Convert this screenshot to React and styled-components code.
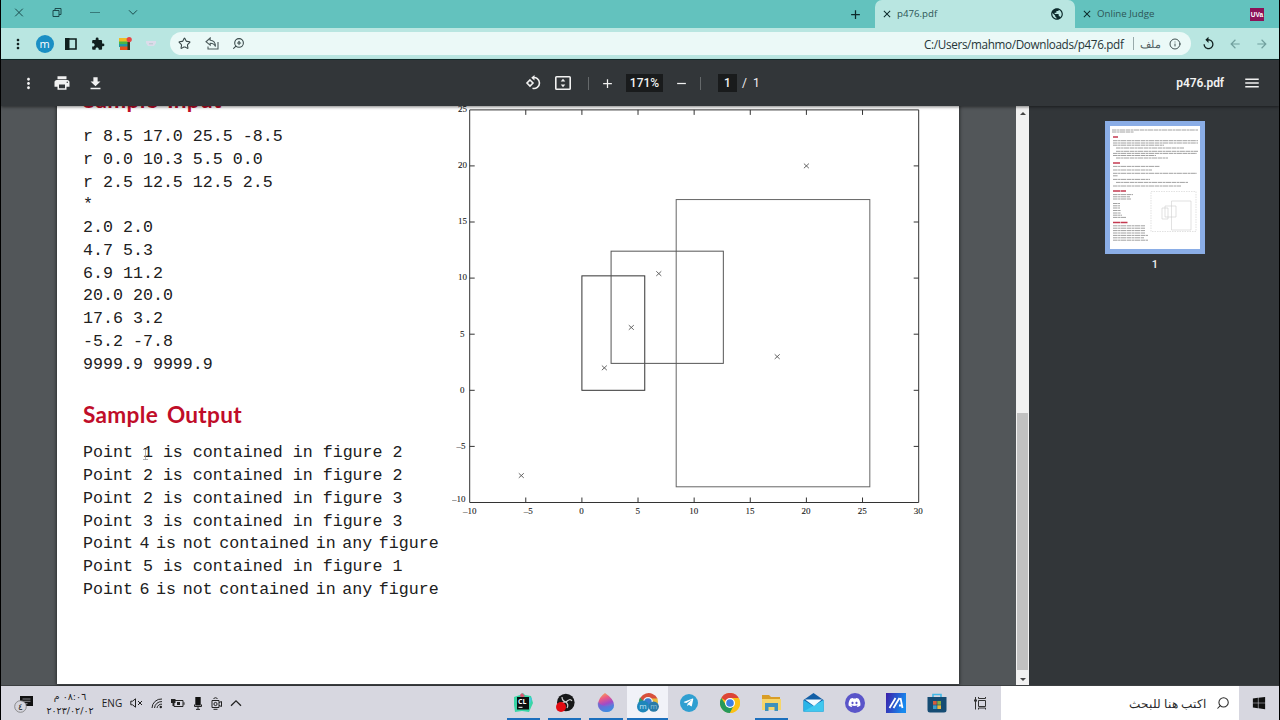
import React from 'react'
import styled, { createGlobalStyle, css } from 'styled-components';
import { Star, ZoomIn, Search, Info } from 'lucide-react';
import {
  MdMoreVert, MdPrint, MdDownload, MdExtension, MdPublic, MdMenu,
  MdAdd, MdRemove, MdClose, MdArrowBack, MdArrowForward, MdReplay,
} from 'react-icons/md';
import { FaWindows, FaDiscord, FaTelegramPlane } from 'react-icons/fa';

const inputLines = [
  'r 8.5 17.0 25.5 -8.5',
  'r 0.0 10.3 5.5 0.0',
  'r 2.5 12.5 12.5 2.5',
  '*',
  '2.0 2.0',
  '4.7 5.3',
  '6.9 11.2',
  '20.0 20.0',
  '17.6 3.2',
  '-5.2 -7.8',
  '9999.9 9999.9',
];

const outputLines = [
  { text: 'Point 1 is contained in figure 2' },
  { text: 'Point 2 is contained in figure 2' },
  { text: 'Point 2 is contained in figure 3' },
  { text: 'Point 3 is contained in figure 3' },
  { text: 'Point 4 is not contained in any figure', tight: true },
  { text: 'Point 5 is contained in figure 1' },
  { text: 'Point 6 is not contained in any figure', tight: true },
];

// chart space: 0,0 is the top left of the svg
const px = (x) => 129.9 + x * 11.225;
const py = (y) => 284.3 - y * 11.22;
const minus = (n) => String(n).replace('-', '–');

const rects = [
  { x1: 8.4, y1: 17, x2: 25.65, y2: -8.6, c: '#666' },
  { x1: 0, y1: 10.2, x2: 5.6, y2: 0, c: '#333' },
  { x1: 2.6, y1: 12.4, x2: 12.6, y2: 2.4, c: '#555' },
];

const marks = [
  [2, 2],
  [4.4, 5.6],
  [6.85, 10.4],
  [20, 20],
  [17.4, 3],
  [-5.4, -7.6],
];

function Chart() {
  const xs = [-10, -5, 0, 5, 10, 15, 20, 25, 30];
  const ys = [25, 20, 15, 10, 5, 0, -5, -10];
  return (
    <ChartSvg width="480" height="420" viewBox="0 0 480 420">
      <g stroke="#333" strokeWidth="1" fill="none">
        <path d="M17.7 3.9V396.5M466.7 3.9V396.5M17.7 3.9H466.7M17.7 396.5H466.7" />
        {xs.slice(1, -1).map((x) => (
          <path key={x} d={`M${px(x)} 3.9v5M${px(x)} 396.5v-5`} />
        ))}
        {ys.slice(1, -1).map((y) => (
          <path key={y} d={`M17.7 ${py(y)}h5M466.7 ${py(y)}h-5`} />
        ))}
      </g>
      {rects.map((r) => (
        <rect key={r.x1} x={px(r.x1)} y={py(r.y1)} width={px(r.x2) - px(r.x1)}
          height={py(r.y2) - py(r.y1)} fill="none" stroke={r.c} strokeWidth="1" />
      ))}
      {marks.map(([x, y]) => (
        <path key={x} d={`M${px(x) - 2.5} ${py(y) - 2.3}l5 4.6m0 -4.6l-5 4.6`} stroke="#555" strokeWidth="0.9" />
      ))}
      {ys.map((y) => (
        <text key={y} x={y < 0 ? 13.5 : y === 0 || y === 5 ? 12.5 : 15} y={y === -10 ? 396 : py(y) + 2.3} textAnchor="end">{minus(y)}</text>
      ))}
      {xs.map((x) => (
        <text key={x} x={px(x) - (x > -10 ? 0.4 : 0) + (x === -5 ? 2.9 : 0)} y="407.5" textAnchor="middle">{minus(x)}</text>
      ))}
    </ChartSvg>
  );
}

// [y, start, end, red]
const thumbRows = [
  [4, 2, 88], [6, 2, 24], [11, 3, 8, 1], [14.7, 3, 88], [17, 3, 88], [19.2, 3, 54], [22, 6, 74],
  [25.3, 6, 88], [27.4, 3, 87], [29.5, 3, 46], [32, 6, 58], [37, 3, 10, 1], [40.4, 3, 50], [44, 3, 42],
  [47.3, 3, 87], [49.8, 3, 8], [53.4, 3, 40], [56.4, 6, 78], [60, 3, 71], [65, 3, 16, 1],
  [68.6, 3, 23], [70.8, 3, 20], [73, 3, 21], [77.5, 3, 10], [79.8, 3, 10], [82, 3, 10], [84.5, 3, 11],
  [87, 3, 11], [89.2, 3, 12], [91.4, 3, 16], [96.5, 3, 18, 1], [99.8, 3, 35], [102.2, 3, 35],
  [104.6, 3, 35], [107, 3, 35], [109.4, 3, 38], [111.8, 3, 34], [114.2, 3, 38],
];

function ThumbPage() {
  return (
    <svg width="90" height="123" viewBox="0 0 90 123">
      {thumbRows.map(([y, a, b, red]) => (
        <path key={y} d={`M${a} ${y}H${b}`} stroke={red ? '#c43a50' : '#a2a2a2'}
          strokeWidth={red ? 1.5 : 1} strokeDasharray={red ? '7 .5' : '4.6 .5 2.4 .4 5.4 .6'} />
      ))}
      <g fill="none" stroke="#cfcfcf" strokeWidth=".6">
        <path d="M41 65.5H86V105.5H41Z" strokeDasharray="1.5 1" />
        <path d="M61.5 75H81V104H61.5ZM52 82H58V93H52ZM55 80H66V91H55Z" />
      </g>
    </svg>
  );
}

function ChromeLogo() {
  return (
    <svg width="20" height="20" viewBox="0 0 20 20">
      <circle cx="10" cy="10" r="10" fill="#fbc116" />
      <path d="M10 10L1.3 5A10 10 0 0 1 18.7 5Z" fill="#dc4437" />
      <path d="M1.3 5A10 10 0 0 0 10 20L14 12L6 12Z" fill="#26995a" />
      <path d="M10 5H18.7A10 10 0 0 1 10 20L14.5 12Z" fill="#fbc116" />
      <circle cx="10" cy="10" r="5" fill="#fff" />
      <circle cx="10" cy="10" r="3.8" fill="#3c7fe6" />
    </svg>
  );
}

function ChromeProfile() {
  return (
    <svg width="22" height="21" viewBox="0 0 22 21">
      <path d="M2 12A9.8 9.8 0 0 1 20.5 6.5L11 10Z" fill="#d8503c" />
      <path d="M2 12A10 10 0 0 1 3 5.5L10 13L8 18Z" fill="#319b62" />
      <path d="M14 6.5H20.5A9 9 0 0 1 20 14L14 14Z" fill="#e8bb3d" />
      <circle cx="11" cy="10" r="5" fill="#eef4fb" />
      <circle cx="11" cy="10" r="3.7" fill="#3a7cd0" />
      <circle cx="16.7" cy="14.6" r="5.2" fill="#287ba8" />
      <circle cx="6" cy="14.6" r="6" fill="#1e86ba" />
      <text x="6" y="17" textAnchor="middle" fontSize="8" fill="#c7e8f5">m</text>
      <text x="16.7" y="17" textAnchor="middle" fontSize="7.5" fill="#8fc6de">m</text>
    </svg>
  );
}

const apps = [
  {
    name: 'clion', open: true,
    icon: (
      <svg width="20" height="20" viewBox="0 0 20 20">
        <path d="M1 4L7 2L10 0L12 2L18 3L20 10L16 19L9 18L2 19L1 12Z" fill="#39d6a5" />
        <path d="M7 2L9 0L12 3L8 5Z" fill="#d85470" />
        <path d="M13 4L19 5L17 11Z" fill="#45c9dc" />
        <rect x="4" y="4" width="12" height="12.5" fill="#0a0d0d" />
        <text x="5" y="11" fontSize="7" fontWeight="700" fill="#fff">CL</text>
        <path d="M5.5 14.3h4" stroke="#fff" />
      </svg>
    ),
  },
  {
    name: 'obs', open: true,
    icon: (
      <svg width="20" height="20" viewBox="0 0 20 20">
        <circle cx="10.8" cy="9.5" r="8.8" fill="#171819" />
        <path d="M7 4Q7 8 11 9Q15 5 17 8M11 9Q14 12 12 15M11 9Q6 9 5 12" stroke="#d2d2d2" strokeWidth="1.2" fill="none" />
        <circle cx="6" cy="14" r="5" fill="#e30b12" />
      </svg>
    ),
  },
  {
    name: 'paint', open: true,
    icon: (
      <svg width="18" height="21" viewBox="0 0 18 21">
        <defs>
          <linearGradient id="drop" x1="0" y1="0" x2="0.3" y2="1">
            <stop offset="0" stopColor="#f2b64f" />
            <stop offset=".35" stopColor="#ed5a83" />
            <stop offset=".65" stopColor="#a04bc8" />
            <stop offset="1" stopColor="#2aa6e6" />
          </linearGradient>
        </defs>
        <path d="M8 1Q17 7 17 13A7 7 0 0 1 9 20A8 8 0 0 1 1 12Q2 5 8 1Z" fill="url(#drop)" />
        <path d="M1 10Q7 17 17 13A7 7 0 0 1 9 20A8 8 0 0 1 1 10Z" fill="#5578dc" opacity=".65" />
      </svg>
    ),
  },
  { name: 'chrome-profile', open: true, active: true, icon: <ChromeProfile /> },
  { name: 'telegram', icon: <TelegramIcon /> },
  { name: 'chrome', icon: <ChromeLogo /> },
  {
    name: 'explorer', open: true,
    icon: (
      <svg width="21" height="18" viewBox="0 0 21 18">
        <path d="M1 1H8L10 3H19V6H1Z" fill="#d99d26" />
        <path d="M1 5H20V16H1Z" fill="#f6d66a" />
        <path d="M4 9H17V17H13.5V13H7.5V17H4Z" fill="#3e91bb" />
      </svg>
    ),
  },
  {
    name: 'mail',
    icon: (
      <svg width="21" height="19" viewBox="0 0 21 19">
        <path d="M0.5 7L10.5 0L20.5 7V18.5H0.5Z" fill="#125fa6" />
        <path d="M.5 7L12 14L20.5 7V18.5H.5Z" fill="#29b5e8" />
        <path d="M.5 18.5L20.5 7V18.5Z" fill="#40c8ef" />
        <path d="M2 6.5H19L11 13Z" fill="#f2fbff" />
      </svg>
    ),
  },
  { name: 'discord', icon: <DiscordIcon /> },
  {
    name: 'asus',
    icon: (
      <svg width="20" height="20" viewBox="0 0 20 20">
        <defs>
          <linearGradient id="asus" x1="0" y1="0" x2="1" y2=".3">
            <stop offset="0" stopColor="#3c1ea9" />
            <stop offset="1" stopColor="#1789ee" />
          </linearGradient>
        </defs>
        <rect width="20" height="20" fill="url(#asus)" />
        <path d="M3.5 15L9.5 5M7.5 15L13.5 5M14.5 5L16.5 15M13 12.5H16" stroke="#fff" strokeWidth="1.8" />
      </svg>
    ),
  },
  {
    name: 'store',
    icon: (
      <svg width="20" height="20" viewBox="0 0 20 20">
        <path d="M6 5V1.5H14V5" stroke="#42b9e8" strokeWidth="1.6" fill="none" />
        <path d="M0.5 4H19.5V17Q19.5 19.5 17 19.5H3Q.5 19.5 .5 17Z" fill="#154c74" />
        <path d="M6 8h3.7v3.7H6Z" fill="#d85c3c" />
        <path d="M10.3 8H14v3.7h-3.7Z" fill="#86ad43" />
        <path d="M6 12.3h3.7V16H6Z" fill="#3c9dc7" />
        <path d="M10.3 12.3H14V16h-3.7Z" fill="#e8b83c" />
      </svg>
    ),
  },
];

function TelegramIcon() {
  return <Round $bg="#2f9fd1"><FaTelegramPlane size={11} /></Round>;
}

function DiscordIcon() {
  return <Round $bg="#5a55c9" $size={20}><FaDiscord size={13} /></Round>;
}

function App() {
  return (
    <Screen>
      <GlobalStyle />
      <TabStrip>
        <WindowButtons>
          <svg width="9" height="9" viewBox="0 0 9 9"><path d="M.7 .7l7.6 7.6m0 -7.6l-7.6 7.6" /></svg>
          <svg width="9" height="9" viewBox="0 0 9 9"><path d="M.5 2.5h6v6h-6zM2.5 2.5v-2h6v6h-2" /></svg>
          <svg width="10" height="9" viewBox="0 0 10 9"><path opacity=".6" d="M0 4.5h10" /></svg>
          <svg width="10" height="9" viewBox="0 0 10 9"><path d="M1 2.3l4 4 4-4" /></svg>
        </WindowButtons>
        <NewTab><MdAdd size={15} /></NewTab>
        <Tab $active>
          <MdClose size={12} />
          <TabTitle>p476.pdf</TabTitle>
          <MdPublic size={14} />
        </Tab>
        <Tab>
          <MdClose size={12} />
          <TabTitle>Online Judge</TabTitle>
          <UvaBadge>UVa</UvaBadge>
        </Tab>
      </TabStrip>

      <Toolbar>
        <Cell $w={26.7}><MdMoreVert size={16} /></Cell>
        <Cell $w={26.7}><Round $bg="#1a8fc4">m</Round></Cell>
        <Cell $w={26.7}>
          <svg width="12" height="12" viewBox="0 0 12 12"><path d="M1 1h10v10H1z" fill="none" stroke="#10201f" strokeWidth="1.6" /><path d="M0 0h4.5v12H0z" fill="#10201f" /></svg>
        </Cell>
        <Cell $w={26.7}><MdExtension size={14} /></Cell>
        <Cell $w={26.7}>
          <svg width="14" height="14" viewBox="0 0 14 14">
            <path d="M1 1h9l-1 4H1z" fill="#edbc24" />
            <path d="M1 4.5h9v3H1z" fill="#46b848" />
            <path d="M1 7h11v3H1z" fill="#219aa2" />
            <path d="M2 9.5h9V13H2z" fill="#e5531d" />
            <path d="M9.5 5H12v8H9.5z" fill="#37331e" />
            <circle cx="11.2" cy="2.6" r="2.6" fill="#e64545" />
          </svg>
        </Cell>
        <Cell $w={26.7}>
          <svg width="12" height="8" viewBox="0 0 12 8"><path d="M1 1h10v2l-2 3H3L1 3z" fill="#dcdcea" /><path d="M4 3.8h4" stroke="#b5c9cc" /></svg>
        </Cell>
        <Omnibox>
          <Cell $w={26.6}><Star size={13} strokeWidth={2} /></Cell>
          <Cell $w={26.6}>
            <svg width="14" height="13" viewBox="0 0 14 13" fill="none" stroke="#4d5c5d" strokeWidth="1.1">
              <path d="M5.2 1L1 4.8L5.2 8.2V6.2Q9 6 10.5 9.5Q10.3 3.5 5.2 3.2ZM3 9.5V12H13V5" />
            </svg>
          </Cell>
          <Cell $w={26.6}><ZoomIn size={13} strokeWidth={2} transform="scale(-1 1)" /></Cell>
          <Address>C:/Users/mahmo/Downloads/p476.pdf</Address>
          <Divider />
          <Scheme>ملف</Scheme>
          <Info size={12} strokeWidth={1.9} />
        </Omnibox>
        <NavButtons>
          <Cell $w={27}><MdReplay size={15} /></Cell>
          <Cell $w={27} $dim><MdArrowBack size={14} /></Cell>
          <Cell $w={27} $dim><MdArrowForward size={14} /></Cell>
        </NavButtons>
      </Toolbar>

      <PdfBar>
        <PdfActions>
          <Cell $w={33.5}><MdMoreVert size={17} /></Cell>
          <Cell $w={33.5}><MdPrint size={18} /></Cell>
          <Cell $w={33.5}><MdDownload size={17} /></Cell>
        </PdfActions>
        <PdfControls>
          <Cell $w={30}>
            <svg width="16" height="16" viewBox="0 0 16 16" fill="none" stroke="#f1f1f1" strokeWidth="1.6">
              <path d="M5 5L8 8L5 11L2 8Z" />
              <path d="M7.5 2.7A5.5 5.5 0 1 1 7.5 13.3" />
              <path d="M9.5 0L6.2 2.7L9.5 5.4Z" fill="#f1f1f1" stroke="none" />
            </svg>
          </Cell>
          <Cell $w={30}>
            <svg width="16" height="14" viewBox="0 0 16 14">
              <rect x=".8" y=".8" width="14.4" height="12.4" rx=".8" fill="none" stroke="#f1f1f1" strokeWidth="1.6" />
              <path d="M8 2.8L10.3 5.6H5.7ZM8 11.2L10.3 8.4H5.7Z" fill="#f1f1f1" />
            </svg>
          </Cell>
          <Cell $w={21}><PdfDivider /></Cell>
          <Cell $w={17}><MdAdd size={15} /></Cell>
          <ValueBox $w={37}>171%</ValueBox>
          <Cell $w={37}><MdRemove size={15} /></Cell>
          <Cell $w={1}><PdfDivider /></Cell>
          <PageBox $w={19}>1</PageBox>
          <PageTotal>/&nbsp; 1</PageTotal>
        </PdfControls>
        <PdfTitle>p476.pdf</PdfTitle>
        <MdMenu size={18} />
      </PdfBar>

      <Viewer>
        <Sheet>
          <Samples>
            <Heading $cut>Sample Input</Heading>
            <Listing>
              {inputLines.map((l) => <Line key={l}>{l}</Line>)}
            </Listing>
            <Heading>Sample Output</Heading>
            <Listing>
              {outputLines.map((l) => <Line key={l.text} $tight={l.tight}>{l.text}</Line>)}
            </Listing>
            <Caret width="5" height="11" viewBox="0 0 5 11"><path d="M0 .5h5M2.5 0v11M0 10.5h5" /></Caret>
          </Samples>
          <Chart />
        </Sheet>
        <Scrollbar>
          <Arrow />
          <Thumb />
          <Arrow $down />
        </Scrollbar>
        <Sidebar>
          <Preview><ThumbPage /></Preview>
          <PreviewLabel>1</PreviewLabel>
        </Sidebar>
      </Viewer>

      <Taskbar>
        <Notice>
          <svg width="20" height="18" viewBox="0 0 20 18">
            <path d="M6 1H19V11H10L6 14Z" fill="#111" />
            <path d="M8.5 4h8M8.5 6.3h8M8.5 8.6h5" stroke="#d9d9e2" strokeWidth=".6" />
            <circle cx="6.5" cy="11.5" r="5.8" fill="#d5d5de" stroke="#777" strokeWidth=".8" />
            <text x="6.5" y="15" textAnchor="middle" fontSize="9" fill="#222">٤</text>
          </svg>
        </Notice>
        <Clock>
          <span>٠٨:٠٦ م</span>
          <span>٢٠٢٣/٠٢/٠٢</span>
        </Clock>
        <Lang>ENG</Lang>
        <Tray>
          <svg width="13" height="10" viewBox="0 0 13 10"><path d="M.8 3.2H2.5L5.5 .8V9.2L2.5 6.8H.8ZM8 3l4 4m0 -4l-4 4" /></svg>
          <svg width="12" height="11" viewBox="0 0 12 11"><path d="M1 10A9.3 9.3 0 0 1 11 1M3.5 10A7 7 0 0 1 11 3.6M6 10A4.5 4.5 0 0 1 11 6.2" /><circle cx="9.8" cy="9" r="1.2" fill="#222" stroke="none" /></svg>
          <svg width="14" height="10" viewBox="0 0 14 10"><path d="M3 2.5H12V8.5H3ZM13 4.3V6.8" /><path d="M6 4H9V7H6ZM0 1H4.5V5H3V8H1.5V5H0Z" fill="#222" stroke="none" /></svg>
          <svg width="10" height="13" viewBox="0 0 10 13"><path d="M2.3 0H7.7V8.5H2.3Z" fill="#111" stroke="none" /><path d="M1.5 7.5V9.5H8.5V7.5M5 9.5V12M3 12.4H7" /></svg>
          <svg width="11" height="13" viewBox="0 0 11 13"><path d="M1 3.5H8V10.5H1ZM8 5.5L10.5 4.5V9.5L8 8.5M2.5 1.5Q4.5 0 6.5 1.5M2.5 12.3h4" /><circle cx="4.5" cy="7" r="1.6" /></svg>
          <svg width="12" height="8" viewBox="0 0 12 8"><path d="M1 6.8L6 1.8L11 6.8" strokeWidth="1.3" /></svg>
        </Tray>
        <Apps>
          {apps.map((a) => (
            <AppButton key={a.name} $open={a.open} $active={a.active}>{a.icon}</AppButton>
          ))}
        </Apps>
        <TaskView>
          <svg width="14" height="14" viewBox="0 0 14 14" fill="none" stroke="#333" strokeWidth="1">
            <path d="M5.5 4.5H12.5V10.5H5.5ZM5.5 1V2.5H12.5V1M5.5 13.5V12H12.5V13.5M2.5 1V13.5" />
            <path d="M1 4.5h3" strokeWidth="2" />
          </svg>
        </TaskView>
        <SearchBox>
          <span>اكتب هنا للبحث</span>
          <Search size={14} strokeWidth={1.8} transform="scale(-1 1)" />
        </SearchBox>
        <Start><FaWindows size={14} /></Start>
      </Taskbar>
    </Screen>
  );
}

export default App;

const GlobalStyle = createGlobalStyle`
  * { box-sizing: border-box; }
  body { margin: 0; overflow: hidden; background: #000; }
  svg { display: block; flex-shrink: 0; }
`;

const Screen = styled.div`
  width: 1280px;
  height: 720px;
  display: flex;
  flex-direction: column;
  overflow: hidden;
  border: solid #000;
  border-width: 0 1px;
  font-family: "Open Sans", "Noto Sans", sans-serif;
`;

const center = css`
  display: flex;
  align-items: center;
  justify-content: center;
`;

const Cell = styled.div`
  ${center}
  flex: none;
  width: ${(p) => p.$w}px;
  color: ${(p) => (p.$dim ? '#71a09e' : 'inherit')};
`;

const TabStrip = styled.div`
  display: flex;
  height: 28px;
  flex: none;
  background: #63c2be;
  color: #0d2b2c;
`;

const WindowButtons = styled.div`
  display: flex;
  flex: 1;
  align-items: center;
  padding-bottom: 3px;
  margin-left: -1px;

  svg {
    margin: 0 14px;
    width: 10px;
    fill: none;
    stroke: #1c4a4c;
  }
`;

const NewTab = styled.div`
  ${center}
  width: 40px;
`;

const Tab = styled.div`
  display: flex;
  align-items: center;
  width: ${(p) => (p.$active ? 200 : 204)}px;
  padding: 0 ${(p) => (p.$active ? 11 : 15)}px 0 6px;
  border-radius: 7px 7px 0 0;
  background: ${(p) => (p.$active ? '#b9e6e1' : 'transparent')};
`;

const TabTitle = styled.span`
  flex: 1;
  padding-left: 4px;
  padding-bottom: 1px;
  font-size: 9.7px;
  color: #2d5556;
`;

const UvaBadge = styled.span`
  ${center}
  width: 14px;
  height: 13px;
  background: #8c1258;
  color: #fff;
  font: 700 6.5px "Liberation Sans", sans-serif;
`;

const Toolbar = styled.div`
  display: flex;
  align-items: center;
  height: 32px;
  flex: none;
  padding: 0 3.5px;
  border-bottom: 1px solid #12302f;
  background: #b9e6e1;
  color: #10201f;
`;

const Round = styled.span`
  ${center}
  width: ${(p) => p.$size || 18}px;
  height: ${(p) => p.$size || 18}px;
  border-radius: 50%;
  background: ${(p) => p.$bg};
  color: #fff;
  font-size: 11px;
  line-height: 1;
`;

const Omnibox = styled.div`
  display: flex;
  align-items: center;
  flex: 1;
  height: 23px;
  margin-left: 5px;
  padding: 0 10px 0 2px;
  border-radius: 12px;
  background: #ebf9f7;
  color: #384849;
`;

const Address = styled.span`
  flex: 1;
  text-align: right;
  font-size: 11.7px;
  letter-spacing: -0.33px;
  color: #263637;
`;

const Divider = styled.span`
  width: 1px;
  height: 13px;
  margin: 0 6px 0 9px;
  background: #98aaab;
`;

const Scheme = styled.span`
  width: 22px;
  margin-right: 7px;
  font-size: 11px;
  color: #526263;
`;

const NavButtons = styled.div`
  display: flex;
  padding-left: 4px;
`;

const PdfBar = styled.div`
  display: flex;
  align-items: center;
  height: 46px;
  flex: none;
  padding: 0 18px 0 11px;
  background: #323639;
  color: #f1f1f1;
  position: relative;
  z-index: 1;
  box-shadow: 0 1px 3px rgba(0, 0, 0, 0.5);
  font-family: Roboto, sans-serif;
`;

const PdfActions = styled.div`
  display: flex;
  width: 506px;
`;

const PdfControls = styled.div`
  display: flex;
  align-items: center;
  flex: 1;
`;

const ValueBox = styled.span`
  ${center}
  width: ${(p) => p.$w}px;
  height: 18px;
  margin-left: 10px;
  background: #191b1c;
  font-size: 12px;
  font-weight: 500;
`;

const PageBox = styled(ValueBox)`
  margin-left: 17px;
`;

const PageTotal = styled.span`
  margin-left: 5px;
  font-size: 12px;
`;

const PdfDivider = styled.span`
  width: 1px;
  height: 13px;
  background: #65696b;
`;

const PdfTitle = styled.span`
  margin-right: 19px;
  font-size: 12px;
  font-weight: 600;
  letter-spacing: -0.1px;
`;

const Viewer = styled.div`
  display: flex;
  flex: 1;
  min-height: 0;
  background: #525659;
  border-bottom: 1px solid #3c3f41;
`;

const Sheet = styled.div`
  display: flex;
  width: 902px;
  height: 578px;
  margin: 0 57px 0 56px;
  overflow: hidden;
  background: #fff;
  box-shadow: 0 0 3px 1px rgba(0, 0, 0, 0.45);
`;

const Samples = styled.div`
  position: relative;
  width: 395px;
  padding-left: 26px;
`;

const Heading = styled.h2`
  margin: ${(p) => (p.$cut ? '-21px 0 11px' : '23.5px 0 12.5px')};
  height: 30px;
  line-height: 30px;
  font-family: Lato, sans-serif;
  font-size: 22.6px;
  font-weight: 700;
  letter-spacing: 0.32px;
  word-spacing: 3px;
  color: #c00d29;
  white-space: nowrap;
`;

const Listing = styled.div`
  font-family: "Liberation Mono", monospace;
  font-size: 16.65px;
  color: #202020;
`;

const Line = styled.div`
  height: 22.75px;
  line-height: 22.75px;
  white-space: pre;
  word-spacing: ${(p) => (p.$tight ? '-3.4px' : '0')};
`;

const Caret = styled.svg`
  position: absolute;
  left: 86px;
  top: 343px;
  fill: none;
  stroke: #999;
  stroke-width: 0.8;
`;

const ChartSvg = styled.svg`
  text {
    font: 9px "Liberation Serif", serif;
    fill: #222;
    stroke: #222;
    stroke-width: 0.1px;
  }
`;

const Scrollbar = styled.div`
  display: flex;
  flex-direction: column;
  align-items: center;
  justify-content: space-between;
  width: 13px;
  padding: 6px 0 4px;
  background: #f1f1f1;
`;

const Thumb = styled.div`
  width: 11px;
  height: 257px;
  margin-top: auto;
  margin-bottom: 8px;
  background: #c1c1c1;
`;

const Arrow = styled.span`
  border: 3px solid transparent;
  border-top-width: ${(p) => (p.$down ? 3 : 0)}px;
  border-bottom-width: ${(p) => (p.$down ? 0 : 3)}px;
  border-${(p) => (p.$down ? 'top' : 'bottom')}-color: #444;
`;

const Sidebar = styled.div`
  display: flex;
  flex-direction: column;
  align-items: center;
  flex: 1;
  padding: 15px 0 0 2px;
  background: #323639;
`;

const Preview = styled.div`
  padding: 5px;
  background: #8aade6;

  svg {
    background: #fff;
  }
`;

const PreviewLabel = styled.span`
  margin-top: 4px;
  font: 500 11px Roboto, sans-serif;
  color: #f1f1f1;
`;

const Taskbar = styled.div`
  display: flex;
  align-items: stretch;
  height: 34px;
  flex: none;
  background: #d7d7e0;
  color: #1d1d1f;
`;

const Notice = styled.div`
  ${center}
  width: 46px;
  padding-top: 2px;
`;

const Clock = styled.div`
  ${center}
  flex-direction: column;
  width: 46px;
  direction: rtl;
  padding-top: 1px;
  font: 9.5px/14px "DejaVu Sans", sans-serif;
  white-space: nowrap;
`;

const Lang = styled.span`
  ${center}
  width: 38px;
  font-size: 10px;
`;

const Tray = styled.div`
  display: flex;
  align-items: center;
  gap: 8px;
  margin-left: -1px;

  svg {
    fill: none;
    stroke: #222;
  }
`;

const Apps = styled.div`
  display: flex;
  margin-left: auto;
`;

const AppButton = styled.div`
  ${center}
  width: 41.4px;
  padding: 0 0 1px;
  background: ${(p) => (p.$active ? '#f1f2f8' : 'transparent')};
  position: relative;

  &::after {
    content: "";
    position: absolute;
    bottom: 0;
    left: ${(p) => (p.$active ? 0 : 4)}px;
    right: ${(p) => (p.$active ? 0 : 4)}px;
    height: 2px;
    background: ${(p) => (p.$open ? '#1c6fbd' : 'transparent')};
  }
`;

const TaskView = styled.div`
  ${center}
  width: 43px;
`;

const SearchBox = styled.div`
  display: flex;
  align-items: center;
  justify-content: flex-end;
  gap: 10px;
  width: 238px;
  padding-right: 9px;
  background: #fff;
  color: #2a2a2a;
  font-size: 12px;
`;

const Start = styled.div`
  ${center}
  width: 40px;
  color: #111;
`;
